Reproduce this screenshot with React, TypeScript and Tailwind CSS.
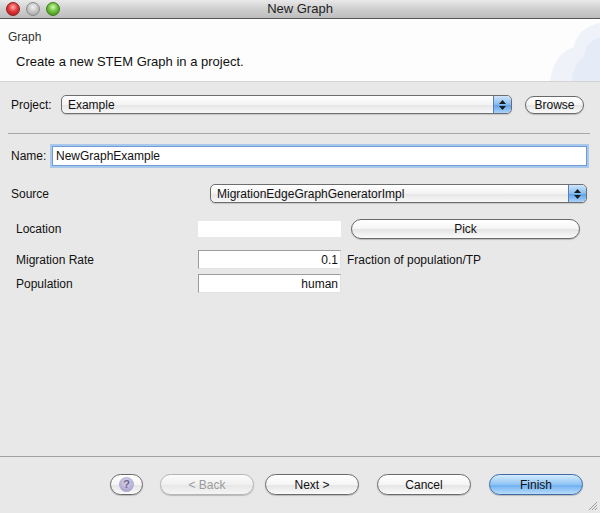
import type { ReactNode } from "react"

const font = { fontFamily: '"Liberation Sans", Arial, sans-serif' }

function Light({ color }: { color: "red" | "gray" | "green" }) {
  const cls =
    color === "red"
      ? "bg-[radial-gradient(circle_at_50%_35%,#ffb3b3_0%,#e5393a_45%,#a01414_100%)] border-[#8c1f1f]"
      : color === "green"
        ? "bg-[radial-gradient(circle_at_50%_35%,#d7f7b5_0%,#6cc23b_45%,#3c7d19_100%)] border-[#3f7a22]"
        : "bg-[radial-gradient(circle_at_50%_35%,#f4f4f4_0%,#c8c8c8_45%,#9a9a9a_100%)] border-[#8a8a8a]"
  return <span className={`h-[14px] w-[14px] rounded-full border ${cls}`} />
}

function Stepper() {
  return (
    <span className="flex h-full w-[18px] flex-col items-center justify-center gap-[2px] rounded-r-[4px] border-l border-[#5a7fb0] bg-[linear-gradient(#cfe5fb,#86bdf1_50%,#5aa0e8_51%,#a9d3fa)]">
      <svg width="7" height="4" viewBox="0 0 7 4">
        <path d="M3.5 0 L7 4 L0 4 Z" fill="#1c1c1c" />
      </svg>
      <svg width="7" height="4" viewBox="0 0 7 4">
        <path d="M0 0 L7 0 L3.5 4 Z" fill="#1c1c1c" />
      </svg>
    </span>
  )
}

function Combo({ value, className }: { value: string; className: string }) {
  return (
    <div
      className={`flex h-[19px] items-center overflow-hidden rounded-[5px] border border-[#6e6e6e] bg-[linear-gradient(#ffffff,#f3f3f3_50%,#e6e6e6_51%,#f7f7f7)] shadow-[0_1px_1px_rgba(0,0,0,0.15)] ${className}`}
    >
      <span className="flex-1 pl-[6px] text-[12px] leading-none text-[#111]">{value}</span>
      <Stepper />
    </div>
  )
}

function Pill({
  children,
  className,
  variant = "normal",
}: {
  children: ReactNode
  className: string
  variant?: "normal" | "disabled" | "default"
}) {
  const look =
    variant === "default"
      ? "border-[#3f6aa3] bg-[linear-gradient(#d6ebfd,#8fc4f4_50%,#6aaef0_51%,#b9dcfb)] text-[#111]"
      : variant === "disabled"
        ? "border-[#b5b5b5] bg-[linear-gradient(#fbfbfb,#f0f0f0_50%,#e6e6e6_51%,#f5f5f5)] text-[#9b9b9b]"
        : "border-[#6a6a6a] bg-[linear-gradient(#ffffff,#f5f5f5_50%,#e4e4e4_51%,#fafafa)] text-[#111]"
  return (
    <button
      type="button"
      className={`flex items-center justify-center rounded-full border text-[12px] leading-none shadow-[0_1px_1px_rgba(0,0,0,0.2)] ${look} ${className}`}
    >
      {children}
    </button>
  )
}

function Field({ value, bordered = true }: { value?: string; bordered?: boolean }) {
  return (
    <div
      className={`flex w-[143px] items-center justify-end bg-white pr-[2px] text-[12px] text-[#111] ${
        bordered
          ? "h-[19px] border-l border-t border-[#9c9c9c] border-b border-b-[#e2e2e2] border-r border-r-[#e2e2e2]"
          : "h-[16px]"
      }`}
    >
      {value}
    </div>
  )
}

export default function App() {
  return (
    <div className="flex h-[513px] w-[600px] flex-col overflow-hidden bg-[#e8e8e8] text-[#111]" style={font}>
      {/* title bar */}
      <div className="relative flex h-[19px] shrink-0 items-center border-b border-[#555] bg-[linear-gradient(#e9e9e9,#cfcfcf_50%,#bdbdbd)]">
        <div className="flex items-center gap-[6px] pl-[6px]">
          <Light color="red" />
          <Light color="gray" />
          <Light color="green" />
        </div>
        <span className="absolute left-0 right-0 text-center text-[13px] text-[#222]">New Graph</span>
      </div>

      {/* header */}
      <div className="relative h-[63px] shrink-0 overflow-hidden border-b border-[#d4d4d4] bg-[#fcfdfc]">
        <svg className="absolute right-0 top-0" width="70" height="63" viewBox="0 0 70 63">
          <path d="M70 4 C58 6 46 14 44 28 C30 32 22 46 20 63 L70 63 Z" fill="#f0f2fa" />
          <path d="M70 18 C62 20 54 28 54 38 C46 42 42 52 42 63 L70 63 Z" fill="#e6ebf8" />
        </svg>
        <div className="relative pl-[8px] pt-[9px] text-[12px] text-[#333]">Graph</div>
        <div className="relative pl-[16px] pt-[6px] text-[13px]">Create a new STEM Graph in a project.</div>
      </div>

      {/* body */}
      <div className="flex flex-1 flex-col">
        <div className="mt-[13px] flex items-center pl-[11px] pr-[16px]">
          <span className="w-[50px] text-[12px]">Project:</span>
          <Combo value="Example" className="w-[452px]" />
          <Pill className="ml-[13px] h-[18px] w-[59px]">Browse</Pill>
        </div>

        <div className="mx-[8px] mt-[19px] h-px w-[582px] bg-[#a6a6a6]" />

        <div className="mt-[12px] flex items-center pl-[11px]">
          <span className="w-[41px] text-[12px]">Name:</span>
          <div className="flex h-[20px] w-[535px] items-center border border-[#6f9ad3] bg-white pl-[3px] text-[12px] shadow-[0_0_0_2px_#a9c8ee]">
            NewGraphExample
          </div>
        </div>

        <div className="mt-[18px] flex items-center pl-[11px]">
          <span className="w-[199px] text-[12px]">Source</span>
          <Combo value="MigrationEdgeGraphGeneratorImpl" className="w-[377px]" />
        </div>

        <div className="mt-[16px] flex items-center pl-[16px]">
          <span className="w-[182px] text-[12px]">Location</span>
          <Field bordered={false} />
          <Pill className="ml-[10px] h-[20px] w-[229px]">Pick</Pill>
        </div>

        <div className="mt-[11px] flex items-center pl-[16px]">
          <span className="w-[182px] text-[12px]">Migration Rate</span>
          <Field value="0.1" />
          <span className="ml-[6px] text-[12px]">Fraction of population/TP</span>
        </div>

        <div className="mt-[5px] flex items-center pl-[16px]">
          <span className="w-[182px] text-[12px]">Population</span>
          <Field value="human" />
        </div>

        <div className="mt-auto h-px w-full bg-[#a0a0a0]" />

        <div className="relative flex h-[56px] items-start pt-[17px]">
          <Pill className="ml-[110px] h-[21px] w-[33px]">
            <span className="flex h-[15px] w-[15px] items-center justify-center rounded-full bg-[radial-gradient(circle_at_50%_35%,#d9d4ea,#9d93c2)] text-[11px] font-bold text-[#6b6490]">
              ?
            </span>
          </Pill>
          <Pill variant="disabled" className="ml-[17px] h-[21px] w-[94px]">
            &lt; Back
          </Pill>
          <Pill className="ml-[11px] h-[21px] w-[94px]">Next &gt;</Pill>
          <Pill className="ml-[18px] h-[21px] w-[94px]">Cancel</Pill>
          <Pill variant="default" className="ml-[18px] h-[21px] w-[94px]">
            Finish
          </Pill>
          <svg className="absolute bottom-[2px] right-[2px]" width="11" height="11" viewBox="0 0 11 11">
            <path d="M10 2 L2 10 M10 5 L5 10 M10 8 L8 10" stroke="#9a9a9a" strokeWidth="1" />
          </svg>
        </div>
      </div>
    </div>
  )
}
